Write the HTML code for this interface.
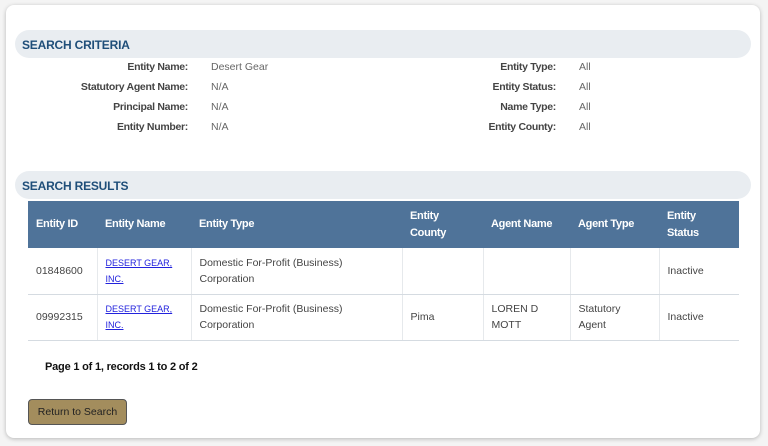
<!DOCTYPE html>
<html><head><style>
*{margin:0;padding:0;box-sizing:border-box}
body{width:768px;height:446px;background:#f4f4f4;font-family:"Liberation Sans",sans-serif;position:relative;overflow:hidden}
.card{position:absolute;left:6px;top:5px;width:754px;height:433px;background:#fff;border-radius:8px;box-shadow:0 1px 4px rgba(0,0,0,.25)}
.bar{position:absolute;left:15px;width:736px;height:28px;background:#e9edf1;border-radius:14px;color:#1f4e79;font-weight:bold;font-size:12px;padding-left:7px;line-height:30px;letter-spacing:-.2px}
.lbl{position:absolute;font-size:10.5px;color:#444;text-align:right;letter-spacing:-.3px;font-weight:bold}
.val{position:absolute;font-size:10.5px;color:#666}
table{position:absolute;left:28px;top:201px;width:711px;border-collapse:collapse;font-size:10.5px;table-layout:fixed}
th{background:#4f7399;color:#fff;text-align:left;font-weight:bold;font-size:11px;height:47px;padding:0 8px;letter-spacing:-.3px;line-height:17px}
td{height:46px;padding:0 8px;color:#444;border-bottom:1px solid #d5dbe1;border-left:1px solid #e6e9ec;line-height:16px;vertical-align:middle}
td:first-child{border-left:none}
a{color:#2222dd;font-size:9px;text-decoration:underline}
.pg{position:absolute;left:45px;top:361px;font-size:11px;font-weight:bold;color:#111;letter-spacing:-.2px}
.btn{position:absolute;left:28px;top:399px;width:99px;height:26px;background:#a38d5d;border:1px solid #555;border-radius:4px;font-size:10.5px;color:#222;text-align:center;line-height:25px}
</style></head><body>
<div class="card"></div>
<div class="bar" style="top:30px">SEARCH CRITERIA</div>
<div class="lbl" style="left:40px;width:148px;top:61px">Entity Name:</div><div class="val" style="left:211px;top:61px">Desert Gear</div>
<div class="lbl" style="left:40px;width:148px;top:81px">Statutory Agent Name:</div><div class="val" style="left:211px;top:81px">N/A</div>
<div class="lbl" style="left:40px;width:148px;top:101px">Principal Name:</div><div class="val" style="left:211px;top:101px">N/A</div>
<div class="lbl" style="left:40px;width:148px;top:121px">Entity Number:</div><div class="val" style="left:211px;top:121px">N/A</div>
<div class="lbl" style="left:400px;width:156px;top:61px">Entity Type:</div><div class="val" style="left:579px;top:61px">All</div>
<div class="lbl" style="left:400px;width:156px;top:81px">Entity Status:</div><div class="val" style="left:579px;top:81px">All</div>
<div class="lbl" style="left:400px;width:156px;top:101px">Name Type:</div><div class="val" style="left:579px;top:101px">All</div>
<div class="lbl" style="left:400px;width:156px;top:121px">Entity County:</div><div class="val" style="left:579px;top:121px">All</div>
<div class="bar" style="top:171px">SEARCH RESULTS</div>
<table>
<colgroup><col style="width:69px"><col style="width:94px"><col style="width:211px"><col style="width:81px"><col style="width:87px"><col style="width:89px"><col style="width:80px"></colgroup>
<tr><th>Entity ID</th><th>Entity Name</th><th>Entity Type</th><th>Entity<br>County</th><th>Agent Name</th><th>Agent Type</th><th>Entity<br>Status</th></tr>
<tr><td>01848600</td><td><a>DESERT GEAR, INC.</a></td><td>Domestic For-Profit (Business) Corporation</td><td></td><td></td><td></td><td>Inactive</td></tr>
<tr><td>09992315</td><td><a>DESERT GEAR, INC.</a></td><td>Domestic For-Profit (Business) Corporation</td><td>Pima</td><td>LOREN D<br>MOTT</td><td>Statutory<br>Agent</td><td>Inactive</td></tr>
</table>
<div class="pg">Page 1 of 1, records 1 to 2 of 2</div>
<div class="btn">Return to Search</div>
</body></html>
